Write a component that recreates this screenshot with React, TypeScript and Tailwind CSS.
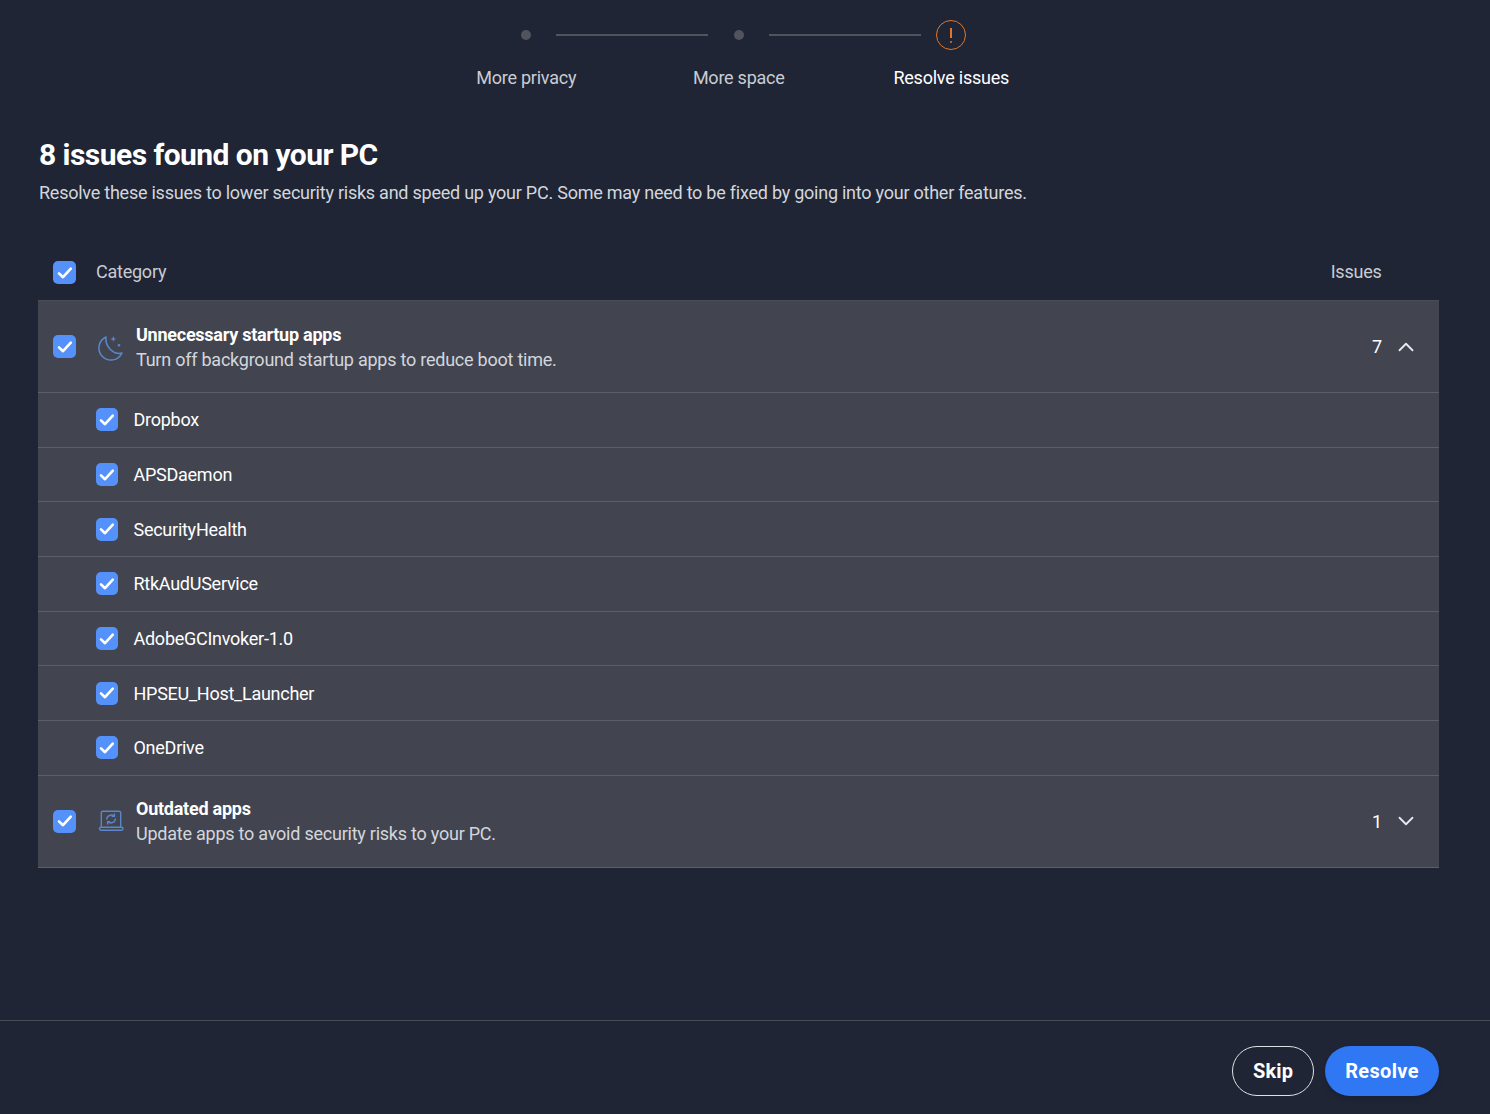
import { ChevronDown, ChevronUp } from "lucide-react";

const apps = [
  "Dropbox",
  "APSDaemon",
  "SecurityHealth",
  "RtkAudUService",
  "AdobeGCInvoker-1.0",
  "HPSEU_Host_Launcher",
  "OneDrive",
];

const Check: React.FC<{ small?: boolean }> = ({ small }) => (
  <span
    className={`flex shrink-0 items-center justify-center rounded-[5px] bg-[#5591fb] ${
      small ? "h-[23px] w-[22px]" : "h-[23px] w-[23px]"
    }`}
  >
    <svg width="16" height="16" viewBox="0 0 16 16" fill="none">
      <path
        d="M2 8.4 L6 12.2 L13.8 3.6"
        stroke="#fff"
        strokeWidth="2.6"
        strokeLinecap="round"
        strokeLinejoin="round"
      />
    </svg>
  </span>
);

const MoonIcon = () => (
  <svg width="28" height="26" viewBox="0 0 28 26" fill="none" stroke="#5a86cc" strokeWidth="1.5" className="overflow-visible">
    <path d="M10 3 A12.08 12.08 0 1 0 26 19 C18.5 21.5 8.5 13 10 3 Z" strokeLinejoin="round" />
    <path d="M17.3 2 L18.1 4.2 L20.3 5 L18.1 5.8 L17.3 8 L16.5 5.8 L14.3 5 L16.5 4.2 Z" fill="#5a86cc" stroke="none" />
    <circle cx="23" cy="11.3" r="1.3" fill="#5a86cc" stroke="none" />
  </svg>
);

const LaptopIcon = () => (
  <svg width="28" height="24" viewBox="0 0 28 24" fill="none" stroke="#5a86cc" strokeWidth="1.4">
    <path d="M5.3 18 V3.8 A1.5 1.5 0 0 1 6.8 2.3 H23.2 A1.5 1.5 0 0 1 24.7 3.8 V18" />
    <rect x="3.5" y="18.2" width="23.5" height="3" rx="1.4" />
    <path d="M10.6 10.6 A4.6 4.6 0 0 1 18 7 M19.4 9.4 A4.6 4.6 0 0 1 12 13" />
    <path d="M18.4 4.4 V7.4 H15.6 M11.6 15.6 V12.6 H14.4" />
  </svg>
);

const CategoryRow: React.FC<{
  icon: React.ReactNode;
  title: string;
  description: string;
  count: number;
  open?: boolean;
}> = ({ icon, title, description, count, open }) => (
  <div className="flex h-[92px] items-center border-b border-[#5b5e69] pl-[15px] pr-[20px]">
    <Check />
    <span className="ml-[20px] flex w-[40px] shrink-0">{icon}</span>
    <div className="flex-1">
      <div className="text-[18px] leading-[25px] font-bold tracking-[-0.25px] text-white">{title}</div>
      <div className="text-[18px] leading-[25px] tracking-[-0.235px] text-[#d3d6dc]">{description}</div>
    </div>
    <span className="mr-[11px] text-[18px] text-white">{count}</span>
    {open ? (
      <ChevronUp size={26} strokeWidth={1.7} className="text-[#e8e9ec]" />
    ) : (
      <ChevronDown size={26} strokeWidth={1.7} className="text-[#e8e9ec]" />
    )}
  </div>
);

export default function App() {
  return (
    <div className="flex h-[1114px] flex-col bg-[#1f2535] font-['Roboto',sans-serif] text-white">
      <nav className="pt-[20px]">
        <div className="flex h-[30px] items-center pl-[521px]">
          <span className="h-[10px] w-[10px] rounded-full bg-[#51545f]" />
          <span className="ml-[25px] h-[2px] w-[152px] bg-[#51545f]" />
          <span className="ml-[26px] h-[10px] w-[10px] rounded-full bg-[#51545f]" />
          <span className="ml-[25px] h-[2px] w-[152px] bg-[#51545f]" />
          <span className="relative ml-[15px] flex h-[30px] w-[30px] items-center justify-center rounded-full border-[1.5px] border-[#e2762a]">
            <span className="h-[10px] w-[1.5px] -translate-y-[2px] bg-[#e2762a]" />
            <span className="absolute bottom-[6.5px] h-[2px] w-[2px] rounded-full bg-[#e2762a]" />
          </span>
        </div>
        <div className="mt-[17px] flex pl-[420px] text-[18px] leading-[21px] tracking-[-0.235px]">
          <span className="w-[212.5px] text-center text-[#c9ccd3]">More privacy</span>
          <span className="w-[212.5px] text-center text-[#c9ccd3]">More space</span>
          <span className="w-[212.5px] text-center text-white">Resolve issues</span>
        </div>
      </nav>

      <main className="flex-1 px-[38px] pr-[51px]">
        <h1 className="mt-[47px] pl-[1px] text-[30px] leading-[40px] font-bold tracking-[-0.54px]">
          8 issues found on your PC
        </h1>
        <p className="mt-[5px] pl-[1px] text-[18px] leading-[26px] tracking-[-0.24px] text-[#d3d6dc]">
          Resolve these issues to lower security risks and speed up your PC. Some may need to be fixed by going into your other features.
        </p>

        <div className="mt-[36px] flex h-[58px] items-center pl-[15px] pr-[57px] text-[18px] tracking-[-0.235px] text-[#c9ccd3]">
          <span className="mt-[3px]">
            <Check />
          </span>
          <span className="ml-[20px] flex-1">Category</span>
          <span className="-translate-x-[0.5px]">Issues</span>
        </div>

        <section className="border-t border-[#4a4d58] bg-[#424550]">
          <CategoryRow
            icon={<MoonIcon />}
            title="Unnecessary startup apps"
            description="Turn off background startup apps to reduce boot time."
            count={7}
            open
          />
          {apps.map((app) => (
            <div key={app} className="flex h-[54.7px] items-center border-b border-[#5b5e69] pl-[58px]">
              <Check small />
              <span className="ml-[16px] -translate-x-[0.5px] text-[18px] tracking-[-0.26px] text-white">{app}</span>
            </div>
          ))}
          <CategoryRow
            icon={<LaptopIcon />}
            title="Outdated apps"
            description="Update apps to avoid security risks to your PC."
            count={1}
          />
        </section>
      </main>

      <footer className="flex h-[94px] items-start justify-end gap-[11px] border-t border-[#4a4c57] pr-[51px] pt-[25px]">
        <button className="h-[50px] w-[82px] rounded-full border border-[#e0e1e4] text-[20px] font-bold tracking-[0.15px]">Skip</button>
        <button className="h-[50px] w-[114px] rounded-full bg-[#3077f3] text-[20px] font-bold tracking-[0.35px] shadow-md">Resolve</button>
      </footer>
    </div>
  );
}
